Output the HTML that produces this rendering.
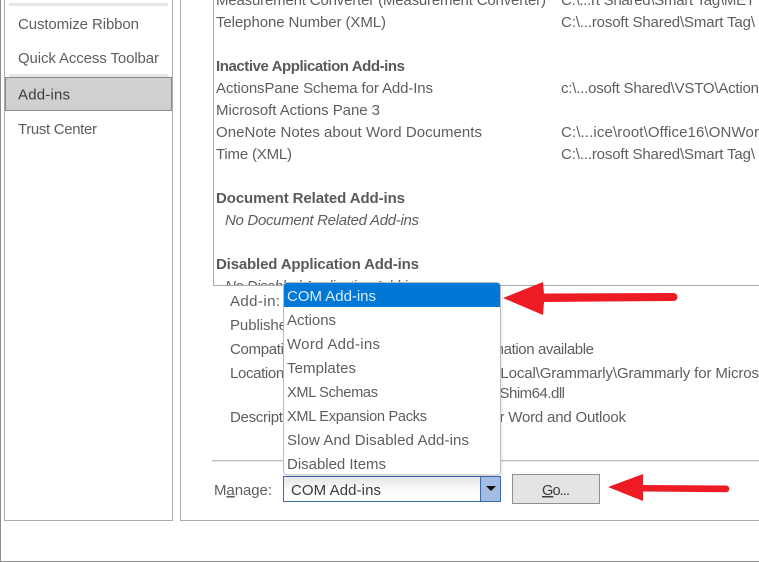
<!DOCTYPE html>
<html><head><meta charset="utf-8"><style>
html,body{margin:0;padding:0;background:#fff;width:759px;height:562px;overflow:hidden}
svg{display:block}
text{font-family:"Liberation Sans",sans-serif;font-size:15px;fill:#5e5e5e;white-space:pre}
.d{fill:#3c3c3c}.b{font-weight:bold;fill:#5a5a5a}.i{font-style:italic}.s{font-size:14.600px}
</style></head><body>
<svg width="759" height="562" viewBox="0 0 759 562" xmlns="http://www.w3.org/2000/svg" lengthAdjust="spacing">
<defs><linearGradient id="g" x1="0" y1="0" x2="0" y2="1"><stop offset="0" stop-color="#e4e4e4"/><stop offset=".5" stop-color="#fafafa"/><stop offset="1" stop-color="#fff"/></linearGradient></defs>
<rect width="759" height="562" fill="#fff"/>
<rect x="0" y="0" width="1" height="562" fill="#8c8c8c"/>
<rect x="0" y="561" width="759" height="1" fill="#8c8c8c"/>
<rect x="4.500" y="-2" width="168" height="522.500" fill="#fff" stroke="#ababab"/>
<rect x="180.500" y="-2" width="590" height="522.500" fill="#fff" stroke="#ababab"/>
<rect x="9" y="3" width="159" height="3" fill="#e6e6e6"/>
<rect x="9" y="74" width="159" height="3" fill="#e6e6e6"/>
<rect x="5.500" y="77.500" width="166" height="33" fill="#d2d0ce" stroke="#8a8a8a"/>
<text x="18" y="29" textLength="121">Customize Ribbon</text>
<text x="18" y="63" textLength="141">Quick Access Toolbar</text>
<text x="18" y="99.500" textLength="52" class="d">Add-ins</text>
<text x="18" y="134" textLength="79">Trust Center</text>

<text x="216" y="5" textLength="330">Measurement Converter (Measurement Converter)</text>
<text x="561" y="5" textLength="194">C:\...rt Shared\Smart Tag\MET</text>
<text x="216" y="27" textLength="170">Telephone Number (XML)</text>
<text x="561" y="27" textLength="194">C:\...rosoft Shared\Smart Tag\</text>
<text x="216" y="71" textLength="189" class="b">Inactive Application Add-ins</text>
<text x="216" y="93" textLength="217">ActionsPane Schema for Add-Ins</text>
<text x="561" y="93" textLength="198">c:\...osoft Shared\VSTO\Action</text>
<text x="216" y="115" textLength="164">Microsoft Actions Pane 3</text>
<text x="216" y="137" textLength="266">OneNote Notes about Word Documents</text>
<text x="561" y="137" textLength="198">C:\...ice\root\Office16\ONWor</text>
<text x="216" y="159" textLength="76">Time (XML)</text>
<text x="561" y="159" textLength="194">C:\...rosoft Shared\Smart Tag\</text>
<text x="216" y="203" textLength="189" class="b">Document Related Add-ins</text>
<text x="225" y="225" textLength="194" class="i">No Document Related Add-ins</text>
<text x="216" y="269" textLength="203" class="b">Disabled Application Add-ins</text>
<text x="225" y="291" textLength="197" class="i">No Disabled Application Add-ins</text>
<rect x="181" y="286" width="578" height="170" fill="#fff"/>
<path d="M213.500 0V285.500H759" fill="none" stroke="#ababab"/>

<text x="230" y="306" textLength="50">Add-in:</text>
<text x="230" y="330" textLength="66">Publisher:</text>
<text x="230" y="354" textLength="86">Compatibility:</text>
<text x="361" y="354" textLength="233">No compatibility information available</text>
<text x="230" y="378" textLength="58">Location:</text>
<text x="361" y="378" textLength="398">C:\Users\...\AppData\Local\Grammarly\Grammarly for Micros</text>
<text x="449" y="398" textLength="116">...\AddinShim64.dll</text>
<text x="230" y="422" textLength="76">Description:</text>
<text x="411" y="422" textLength="215">Grammarly for Word and Outlook</text>

<rect x="212" y="460" width="547" height="1.500" fill="#c4c4c4"/>
<text x="214" y="495" textLength="58">M<tspan text-decoration="underline">a</tspan>nage:</text>
<rect x="283.500" y="476.500" width="217" height="25" fill="url(#g)" stroke="#3c6ba8"/>
<rect x="480.500" y="476.500" width="20" height="25" fill="#a3bde3" stroke="#3c6ba8"/>
<path d="M486 486H496L491 491Z" fill="#111"/>
<text x="291" y="495" textLength="90" class="d">COM Add-ins</text>
<rect x="512.500" y="474.500" width="87" height="29" fill="#e4e4e4" stroke="#8f8f8f"/>
<text x="542" y="495" textLength="28" class="d s"><tspan text-decoration="underline">G</tspan>o...</text>

<rect x="285" y="284" width="218" height="193" rx="4" fill="#000" opacity=".05"/>
<rect x="283.500" y="282.500" width="217" height="192.500" rx="3.500" fill="#fff" stroke="#bdbdbd"/>
<path d="M284 307V286a3 3 0 0 1 3-3H497a3 3 0 0 1 3 3V307Z" fill="#0078d7"/>
<text x="287" y="301" textLength="89" style="fill:#dcebf8">COM Add-ins</text>
<text x="287" y="325" textLength="49">Actions</text>
<text x="287" y="349" textLength="93">Word Add-ins</text>
<text x="287" y="373" textLength="69">Templates</text>
<text x="287" y="397" textLength="91" class="s">XML Schemas</text>
<text x="287" y="421" textLength="140" class="s">XML Expansion Packs</text>
<text x="287" y="445" textLength="182">Slow And Disabled Add-ins</text>
<text x="287" y="469" textLength="99">Disabled Items</text>

<path d="M503 298L543 282L544 293.500L673 293A3.800 3.800 0 0 1 674 301L544 302L543 315Z" fill="#ed1c24"/>
<path d="M608 487L643 474L643 485L726 485.500A3.300 3.300 0 0 1 726 492.300L643 491.500L643 501Z" fill="#ed1c24"/>
</svg>
</body></html>
